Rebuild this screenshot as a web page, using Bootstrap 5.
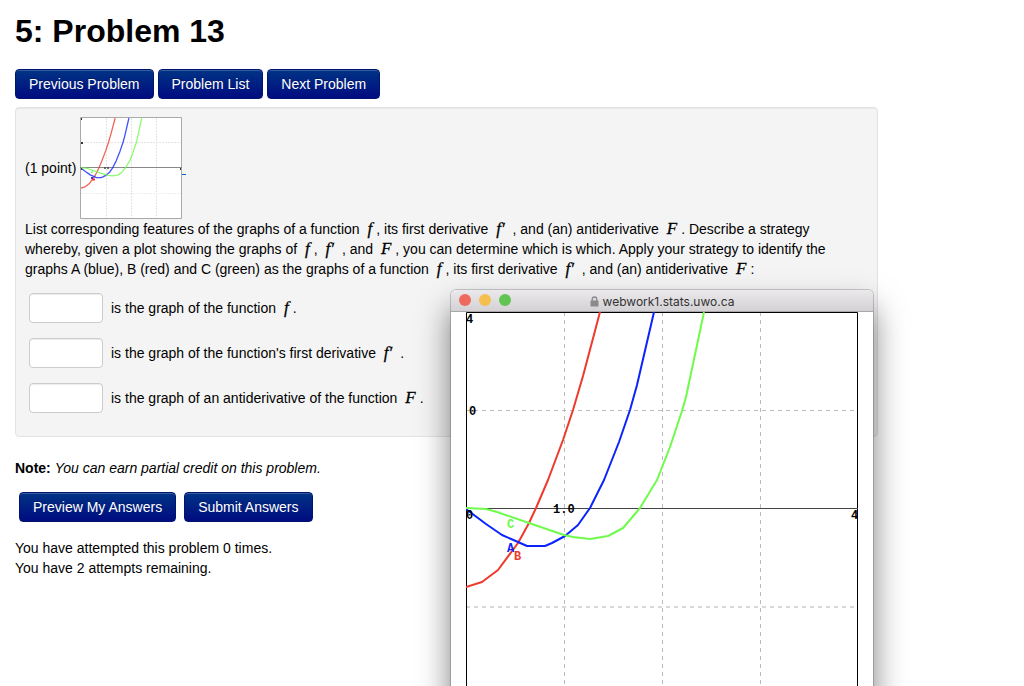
<!DOCTYPE html>
<html lang="en">
<head>
<meta charset="utf-8">
<meta name="viewport" content="width=device-width, initial-scale=1">
<title>5: Problem 13</title>
<link href="https://cdn.jsdelivr.net/npm/bootstrap@5.3.0/dist/css/bootstrap.min.css" rel="stylesheet">
<style>
body { font-family: "Liberation Sans", Arial, sans-serif; font-size: 14px; line-height: 20px; color: #000; background: #fff; }
.page { padding: 11px 146px 0 15px; }
.page-title { font-size: 32px; line-height: 40px; font-weight: 700; margin-bottom: 18px; }
.btn-ww { --bs-btn-color: #fff; --bs-btn-hover-color: #fff; --bs-btn-active-color: #fff; --bs-btn-font-size: 14px; --bs-btn-line-height: 20px;
  --bs-btn-padding-y: 4px; --bs-btn-padding-x: 13px; --bs-btn-border-radius: 4px; --bs-btn-border-color: #00156e;
  background: linear-gradient(#003585, #000a80) border-box; box-shadow: inset 0 1px 0 rgba(255,255,255,.2); text-shadow: 0 -1px 0 rgba(0,0,0,.25); white-space: nowrap; }
.problem { background: #f4f4f4; border: 1px solid #e3e3e3; border-radius: 4px; padding: 9px; margin-top: 8px; box-shadow: inset 0 1px 1px rgba(0,0,0,.05); }
.thumb { width: 102px; height: 102px; display: block; }
.thumb-link::after { content: ""; width: 4px; border-bottom: 1px solid #06c; margin-top: 12px; }
.statement { white-space: nowrap; margin: 0; }
.fn { font-family: "Liberation Serif", serif; font-style: italic; font-size: 17px; line-height: 1; margin: 0 4px; -webkit-text-stroke: .3px; }
.answers { gap: 15px; padding: 14px 0 14px 4px; }
.answer { width: 74px; height: 30px; padding: 4px 6px; font-size: 14px; border: 1px solid #ccc; border-radius: 4px; box-shadow: inset 0 1px 1px rgba(0,0,0,.075); }
.note { margin: 21px 0 14px; }
.popup { top: 290px; left: 451px; width: 422px; bottom: 0; }
.popup-win { min-height: 412px; background: #fff; border-radius: 5px 5px 0 0; box-shadow: 0 0 0 1px rgba(0,0,0,.18), 0 18px 32px rgba(0,0,0,.52); }
.titlebar { height: 22px; background: linear-gradient(#ebe9eb, #d3d1d3); border-bottom: 1px solid #a9a7a9; border-radius: 5px 5px 0 0; font: 12px/22px Inter, sans-serif; color: #333; padding-top: 2px; }
.lights { left: 8px; top: 4px; gap: 8px; }
.light { width: 12px; height: 12px; border-radius: 50%; }
.plot-area { padding: 0 15px; }
.plot-area svg { display: block; width: 100%; height: auto; }
.plot-label { font: bold 12px "Liberation Mono", monospace; }
</style>
</head>
<body>
<div class="position-relative overflow-hidden min-vh-100">
  <main class="page">
    <h1 class="page-title">5: Problem 13</h1>
    <nav class="d-flex gap-1" aria-label="Problems">
      <button type="button" class="btn btn-ww">Previous Problem</button>
      <button type="button" class="btn btn-ww">Problem List</button>
      <button type="button" class="btn btn-ww">Next Problem</button>
    </nav>

    <section class="problem">
      <div class="d-flex align-items-center">
        <span class="me-1">(1 point)</span>
        <a href="#plot" class="thumb-link d-flex align-items-center" aria-label="Enlarge graph">
          <svg class="thumb" viewBox="0 0 102 102" fill="none">
            <path fill="#fff" stroke="#aaa" d="M.5.5h101v101H.5z"/>
            <path stroke="#e4e4e4" stroke-dasharray="2 1" d="M26.500 1v100M51.500 1v100M76.500 1v100M1 25.500h100"/>
            <path stroke="#eee" stroke-dasharray="2 1" d="M1 76.500h100"/>
            <path stroke="#888" d="M0 50.500h102"/>
            <g transform="translate(1 1) scale(.255)" stroke-width="5" stroke-opacity=".8">
              <use href="#curves"/>
            </g>
            <path stroke="#333" stroke-width="2" d="M1 2h1M1 26h2M1 52h1M100 52h1"/>
            <path stroke="#444" stroke-width="1.500" stroke-dasharray="2 1" d="M24 51h5"/>
            <path stroke="#f33" stroke-width="2" d="M12 62.500h3"/>
            <path stroke="#33f" stroke-width="2" d="M11 61h2"/>
            <path stroke="#8f8" stroke-width="2" d="M11 55h2"/>
          </svg>
        </a>
      </div>
      <p class="statement">List corresponding features of the graphs of a function <span class="fn">f</span>, its first derivative <span class="fn">f′</span> , and (an) antiderivative <span class="fn">F</span>. Describe a strategy<br>
      whereby, given a plot showing the graphs of <span class="fn">f</span>, <span class="fn">f′</span> , and <span class="fn">F</span>, you can determine which is which. Apply your strategy to identify the<br>
      graphs A (blue), B (red) and C (green) as the graphs of a function <span class="fn">f</span>, its first derivative <span class="fn">f′</span> , and (an) antiderivative <span class="fn">F</span>:</p>
      <div class="answers d-flex flex-column">
        <div class="d-flex align-items-center gap-2"><input type="text" class="answer" id="ans1"><label for="ans1">is the graph of the function <span class="fn">f</span>.</label></div>
        <div class="d-flex align-items-center gap-2"><input type="text" class="answer" id="ans2"><label for="ans2">is the graph of the function's first derivative <span class="fn">f′</span> .</label></div>
        <div class="d-flex align-items-center gap-2"><input type="text" class="answer" id="ans3"><label for="ans3">is the graph of an antiderivative of the function <span class="fn">F</span>.</label></div>
      </div>
    </section>

    <p class="note"><b>Note:</b> <i>You can earn partial credit on this problem.</i></p>
    <div class="d-flex gap-2 ps-1">
      <button type="submit" class="btn btn-ww">Preview My Answers</button>
      <button type="submit" class="btn btn-ww">Submit Answers</button>
    </div>
    <p class="mt-3 mb-0">You have attempted this problem 0 times.<br>You have 2 attempts remaining.</p>
  </main>

  <aside class="popup position-absolute" id="plot">
    <div class="popup-win">
      <header class="titlebar position-relative d-flex justify-content-center align-items-center">
        <div class="lights position-absolute d-flex">
          <span class="light" style="background:#ee6a5f"></span>
          <span class="light" style="background:#f5bf4f"></span>
          <span class="light" style="background:#61c554"></span>
        </div>
        <svg class="me-1" width="9" height="11" viewBox="0 0 9 11" aria-hidden="true">
          <path d="M2.200 5V3.300a2.300 2.300 0 0 1 4.600 0V5" fill="none" stroke="#8c8a8c" stroke-width="1.300"/>
          <rect x=".5" y="4.600" width="8" height="6" rx=".7" fill="#8c8a8c"/>
        </svg>
        <span>webwork1.stats.uwo.ca</span>
      </header>
      <div class="plot-area">
        <svg viewBox="0 0 392 392" fill="none" role="img" aria-label="Graphs A, B and C">
          <defs>
            <g id="curves" stroke-linejoin="round">
              <path stroke="#ee3a2c" d="M0 275L16 270L32 258L52 231L63 211L70 196L82 168L97 128L107 98L117 64L134 0"/>
              <path stroke="#0b24fb" d="M0 197L20 212L36 223L52 230L61 234H79L86 231L99 224L112 213L124 196L138 168L153 130L164 98L171 73L188 0"/>
              <path stroke="#6ffb4b" d="M0 196L20 197L31 200L63 211L98 223L107 225L124 227L142 224L157 216L174 196L191 168L204 135L216 99L220 85L238 0"/>
            </g>
          </defs>
          <path stroke="#bbb" stroke-dasharray="4 4" d="M98.500 0v392M196.500 0v392M294.500 0v392M0 98.500h392"/>
          <path stroke="#d8d8d8" stroke-width="2" stroke-dasharray="4 4" d="M0 295h392"/>
          <path stroke="#000" d="M.5 392V.5h391V392"/>
          <path stroke="#444" d="M0 196.500h392"/>
          <use href="#curves" stroke-width="2"/>
          <g class="plot-label" fill="#000">
            <text x="0" y="11">4</text>
            <text x="3" y="103">0</text>
            <text x="0" y="207">0</text>
            <text x="87" y="201">1.0</text>
            <text x="385" y="207">4</text>
            <text x="41" y="240" fill="#0b24fb">A</text>
            <text x="48" y="248" fill="#ee3a2c">B</text>
            <text x="41" y="216" fill="#6ffb4b">C</text>
          </g>
        </svg>
      </div>
    </div>
  </aside>
</div>
<script src="https://cdn.jsdelivr.net/npm/bootstrap@5.3.0/dist/js/bootstrap.bundle.min.js"></script>
</body>
</html>
